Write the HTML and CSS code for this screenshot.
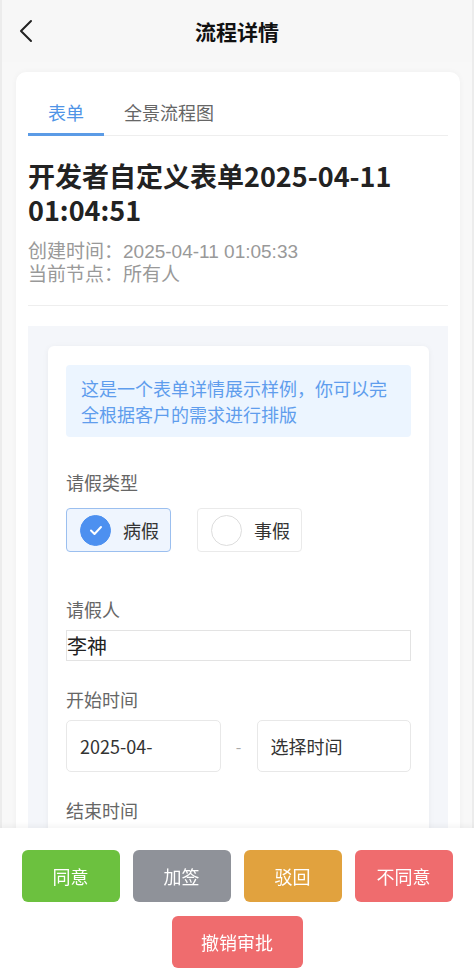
FILE: index.html
```html
<!DOCTYPE html>
<html lang="zh-CN">
<head>
    <meta charset="UTF-8">
    <meta name="viewport" content="width=device-width, initial-scale=1.0">
    <title>流程详情</title>
    <link rel="stylesheet" href="styles.css">
</head>
<body>
    <div class="page">
        <div class="nav-bar">
            <span class="nav-back">
                <svg width="16" height="24" viewBox="0 0 16 24"><path d="M13 2 L3 12 L13 22" fill="none" stroke="#222" stroke-width="2" stroke-linecap="round" stroke-linejoin="round"/></svg>
            </span>
            <h1 class="nav-title">流程详情</h1>
            <span></span>
        </div>

        <div class="main">
            <div class="card">
                <div class="tabs">
                    <div class="tab active">表单</div>
                    <div class="tab">全景流程图</div>
                </div>

                <h2 class="form-title">开发者自定义表单2025-04-11 01:04:51</h2>
                <div class="meta">
                    <div>创建时间：2025-04-11 01:05:33</div>
                    <div>当前节点：所有人</div>
                </div>

                <div class="form-wrap">
                    <div class="form-card">
                        <div class="notice">这是一个表单详情展示样例，你可以完全根据客户的需求进行排版</div>

                        <div class="field field-first">
                            <div class="field-label">请假类型</div>
                            <div class="radio-group">
                                <div class="radio checked">
                                    <span class="radio-dot">
                                        <svg width="16" height="16" viewBox="0 0 16 16"><path d="M3 8.5 L6.5 12 L13 5" fill="none" stroke="#fff" stroke-width="2" stroke-linecap="round" stroke-linejoin="round"/></svg>
                                    </span>
                                    <span>病假</span>
                                </div>
                                <div class="radio">
                                    <span class="radio-dot"></span>
                                    <span>事假</span>
                                </div>
                            </div>
                        </div>

                        <div class="field">
                            <div class="field-label">请假人</div>
                            <div class="text-input">李神</div>
                        </div>

                        <div class="field">
                            <div class="field-label">开始时间</div>
                            <div class="range">
                                <div class="range-input">2025-04-</div>
                                <span class="range-sep">-</span>
                                <div class="range-input">选择时间</div>
                            </div>
                        </div>

                        <div class="field">
                            <div class="field-label">结束时间</div>
                            <div class="range">
                                <div class="range-input"></div>
                                <span class="range-sep"></span>
                                <div class="range-input"></div>
                            </div>
                        </div>
                    </div>
                </div>
            </div>
        </div>

        <div class="action-bar">
            <div class="action-row">
                <button class="btn btn-green">同意</button>
                <button class="btn btn-gray">加签</button>
                <button class="btn btn-orange">驳回</button>
                <button class="btn btn-red">不同意</button>
            </div>
            <div class="action-row">
                <button class="btn btn-red btn-wide">撤销审批</button>
            </div>
        </div>
    </div>
</body>
</html>
```

FILE: styles.css
```css
* {
    box-sizing: border-box;
}
body {
    margin: 0;
    font-family: "Noto Sans CJK SC", "Noto Sans", sans-serif;
    background-color: #f8f8f8;
    color: #333;
}
.page {
    min-height: 100vh;
    border-left: 2px solid #ececec;
    border-right: 2px solid #ececec;
    background-color: #f8f8f8;
}
.nav-bar {
    height: 62px;
    display: grid;
    grid-template-columns: 60px 1fr 60px;
    align-items: center;
    background-color: #f7f7f7;
}
.nav-back {
    display: flex;
    padding-left: 16px;
}
.nav-title {
    margin: 0;
    text-align: center;
    font-size: 21px;
    font-weight: bold;
    color: #111;
}
.main {
    padding: 10px 12px 0 14px;
}
.card {
    background: #fff;
    border-radius: 10px;
    padding: 0 12px;
    height: 900px;
    box-shadow: 0 0 6px rgba(0, 0, 0, 0.04);
}
.tabs {
    display: flex;
    border-bottom: 1px solid #eee;
    padding-top: 19px;
}
.tab {
    padding: 0 20px;
    font-size: 18px;
    line-height: 42px;
    color: #666;
    border-bottom: 3px solid transparent;
    margin-bottom: -1px;
}
.tab.active {
    color: #4f94e6;
    border-bottom-color: #5b9be6;
}
.form-title {
    margin: 23px 0 0;
    font-size: 27px;
    line-height: 34px;
    font-weight: bold;
    color: #222;
}
.meta {
    margin-top: 13px;
    padding-bottom: 19px;
    border-bottom: 1px solid #eee;
    font-family: "Liberation Sans", "Noto Sans CJK SC", sans-serif;
    font-size: 19px;
    line-height: 23px;
    color: #999;
}
.form-wrap {
    margin-top: 20px;
    background-color: #f4f6fa;
    padding: 20px 19px 0 20px;
}
.form-card {
    background: #fff;
    border-radius: 6px;
    padding: 19px 18px 40px;
    box-shadow: 0 1px 6px rgba(0, 0, 0, 0.05);
}
.notice {
    background-color: #ecf5ff;
    color: #5f9ded;
    border-radius: 4px;
    padding: 10px 15px;
    font-size: 18px;
    line-height: 26px;
}
.field {
    margin-top: 26px;
}
.field-first {
    margin-top: 33px;
}
.field-label {
    font-size: 18px;
    line-height: 24px;
    color: #666;
}
.radio-group {
    display: flex;
    gap: 26px;
    margin-top: 14px;
    padding-bottom: 19px;
}
.radio {
    width: 105px;
    height: 44px;
    display: flex;
    align-items: center;
    gap: 12px;
    padding-left: 13px;
    border: 1px solid #eaeaea;
    border-radius: 4px;
    font-size: 18px;
    color: #333;
}
.radio.checked {
    border-color: #9bbfef;
    background-color: #eff5fe;
}
.radio-dot {
    width: 31px;
    height: 31px;
    border-radius: 50%;
    border: 1px solid #ddd;
    display: flex;
    align-items: center;
    justify-content: center;
}
.radio.checked .radio-dot {
    background-color: #4d90f0;
    border-color: #4d90f0;
}
.text-input {
    margin-top: 9px;
    height: 31px;
    border: 1px solid #e3e3e3;
    font-size: 20px;
    line-height: 29px;
    color: #222;
}
.range {
    display: flex;
    align-items: center;
    margin-top: 9px;
}
.range-input {
    flex: 1;
    height: 52px;
    border: 1px solid #e8e8e8;
    border-radius: 5px;
    padding-left: 13px;
    display: flex;
    align-items: center;
    font-size: 18px;
    color: #333;
}
.range-sep {
    width: 36px;
    text-align: center;
    color: #aaa;
}
.action-bar {
    position: fixed;
    left: 0;
    right: 0;
    bottom: 0;
    height: 145px;
    background: #fff;
    box-shadow: 0 -2px 6px rgba(0, 0, 0, 0.05);
    padding-top: 22px;
}
.action-row {
    display: flex;
    justify-content: center;
    gap: 13px;
    margin-bottom: 14px;
}
.btn {
    width: 98px;
    height: 52px;
    border: none;
    border-radius: 6px;
    color: #fff;
    font-family: "Noto Sans CJK SC", sans-serif;
    font-size: 18px;
    cursor: pointer;
}
.btn-green {
    background-color: #6cc13f;
}
.btn-gray {
    background-color: #8f9299;
}
.btn-orange {
    background-color: #e1a23e;
}
.btn-red {
    background-color: #ef6c6e;
}
.btn-wide {
    width: 131px;
}
```
